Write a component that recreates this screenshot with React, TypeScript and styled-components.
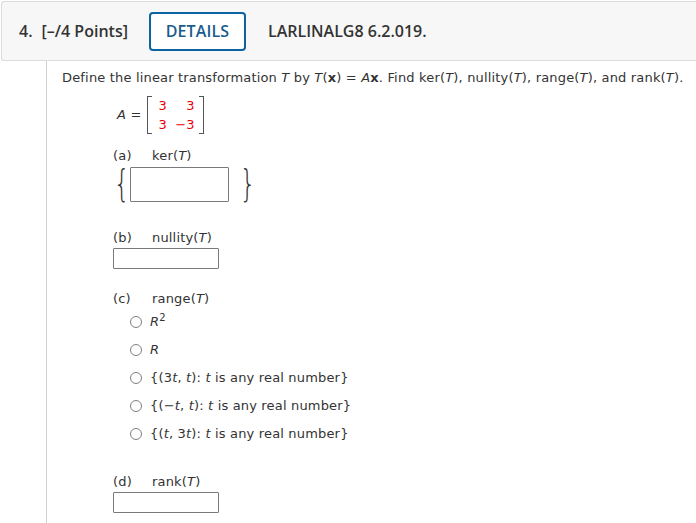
import React from "react";
import styled, { createGlobalStyle } from "styled-components";

const GlobalStyle = createGlobalStyle`
  html, body {
    margin: 0;
    padding: 0;
    background: #fff;
    overflow: hidden;
  }
  body {
    font-family: "DejaVu Sans", Verdana, sans-serif;
    color: #333;
  }
`;

const Page = styled.div`
  width: 696px;
  height: 523px;
  display: flex;
  flex-direction: column;
`;

const Header = styled.div`
  display: flex;
  align-items: center;
  height: 58px;
  margin: 1px 0 0 1px;
  padding-left: 17px;
  background: #f7f7f7;
  border: 1px solid #dcdcdc;
  border-right: none;
  border-radius: 3px 0 0 3px;
  font-family: "Open Sans", sans-serif;
  font-size: 16px;
  font-weight: 600;
  color: #333;
`;

const QNum = styled.span`
  margin-right: 9px;
`;

const DetailsButton = styled.div`
  margin-left: 21px;
  width: 97px;
  height: 39px;
  box-sizing: border-box;
  border: 2px solid #0b64a0;
  border-radius: 4px;
  background: #fff;
  display: flex;
  align-items: center;
  justify-content: center;
  color: #195c8d;
  font-weight: 600;
  letter-spacing: 0.1px;
`;

const Code = styled.span`
  margin-left: 22px;
`;

const Body = styled.div`
  flex: 1;
  margin-left: 46px;
  border-left: 1px solid #cfcfcf;
  padding: 8px 0 0 15px;
  font-size: 13px;
  line-height: 18px;
  letter-spacing: 0.17px;
`;

const Line = styled.div`
  white-space: nowrap;
`;

const Var = styled.i`
  font-style: italic;
`;

const Vec = styled.b`
  font-weight: 700;
`;

const MatrixRow = styled.div`
  display: flex;
  align-items: center;
  margin: 9px 0 0 55px;
  height: 38px;
`;

const Eq = styled.span`
  margin-right: 6px;
`;

const Bracket = styled.div<{ $side: "left" | "right" }>`
  width: 4px;
  align-self: stretch;
  border: 1px solid #555;
  border-${(p) => (p.$side === "left" ? "right" : "left")}: none;
`;

const MatrixGrid = styled.div`
  display: grid;
  grid-template-columns: 10px 26px;
  row-gap: 1px;
  padding: 0 5px 0 6px;
  color: #e8000b;
  line-height: 18px;
  letter-spacing: 0;
`;

const Cell = styled.span<{ $left?: boolean }>`
  text-align: ${(p) => (p.$left ? "left" : "right")};
`;

const PartLabel = styled.div<{ $top: number }>`
  display: flex;
  margin: ${(p) => p.$top}px 0 0 51px;
`;

const PartLetter = styled.span`
  width: 39px;
`;

const SetRow = styled.div`
  display: flex;
  align-items: center;
  margin: 1px 0 0 51px;
  height: 37px;
`;

const Brace = styled.span`
  display: inline-block;
  width: 13px;
  text-align: center;
  font-family: "DejaVu Sans", sans-serif;
  font-weight: 200;
  font-size: 28px;
  line-height: 28px;
  color: #333;
  transform: scale(0.9, 1.3);
`;

const AnswerBox = styled.div<{ $w: number; $h: number }>`
  width: ${(p) => p.$w}px;
  height: ${(p) => p.$h}px;
  box-sizing: border-box;
  border: 1px solid #7a7a7a;
  border-radius: 1px;
  background: #fff;
`;

const BoxWrap = styled.div`
  margin: 1px 0 0 51px;
`;

const SetBox = styled(AnswerBox)`
  margin: 0 10px 0 4px;
`;

const Options = styled.div`
  margin-left: 68px;
`;

const Option = styled.div`
  display: flex;
  align-items: center;
  height: 28px;
`;

const Radio = styled.span`
  width: 12px;
  height: 12px;
  box-sizing: border-box;
  border: 1px solid #808080;
  border-radius: 50%;
  background: #fff;
  margin-right: 8px;
`;

const Sup = styled.sup`
  font-size: 10px;
  line-height: 0;
`;

const T = () => <Var>T</Var>;
const t = <Var>t</Var>;

export default function App() {
  return (
    <Page>
      <GlobalStyle />
      <Header>
        <QNum>4.</QNum>
        <span>[–/4 Points]</span>
        <DetailsButton>DETAILS</DetailsButton>
        <Code>LARLINALG8 6.2.019.</Code>
      </Header>
      <Body>
        <Line>
          Define the linear transformation <T /> by <T />(<Vec>x</Vec>) = <Var>A</Var>
          <Vec>x</Vec>. Find ker(<T />), nullity(<T />), range(<T />), and rank(
          <T />).
        </Line>
        <MatrixRow>
          <Eq>
            <Var>A</Var> =
          </Eq>
          <Bracket $side="left" />
          <MatrixGrid>
            <Cell $left>3</Cell>
            <Cell>3</Cell>
            <Cell $left>3</Cell>
            <Cell>−3</Cell>
          </MatrixGrid>
          <Bracket $side="right" />
        </MatrixRow>

        <PartLabel $top={13}>
          <PartLetter>(a)</PartLetter>
          <span>
            ker(<T />)
          </span>
        </PartLabel>
        <SetRow>
          <Brace>{"{"}</Brace>
          <SetBox $w={99} $h={35} />
          <Brace>{"}"}</Brace>
        </SetRow>

        <PartLabel $top={26}>
          <PartLetter>(b)</PartLetter>
          <span>
            nullity(<T />)
          </span>
        </PartLabel>
        <BoxWrap>
          <AnswerBox $w={106} $h={21} />
        </BoxWrap>

        <PartLabel $top={21}>
          <PartLetter>(c)</PartLetter>
          <span>
            range(<T />)
          </span>
        </PartLabel>
        <Options>
          <Option>
            <Radio />
            <span>
              <Var>R</Var>
              <Sup>2</Sup>
            </span>
          </Option>
          <Option>
            <Radio />
            <Var>R</Var>
          </Option>
          <Option>
            <Radio />
            <span>
              {"{"}(3{t}, {t}): {t} is any real number{"}"}
            </span>
          </Option>
          <Option>
            <Radio />
            <span>
              {"{"}(−{t}, {t}): {t} is any real number{"}"}
            </span>
          </Option>
          <Option>
            <Radio />
            <span>
              {"{"}({t}, 3{t}): {t} is any real number{"}"}
            </span>
          </Option>
        </Options>

        <PartLabel $top={25}>
          <PartLetter>(d)</PartLetter>
          <span>
            rank(<T />)
          </span>
        </PartLabel>
        <BoxWrap>
          <AnswerBox $w={106} $h={21} />
        </BoxWrap>
      </Body>
    </Page>
  );
}
